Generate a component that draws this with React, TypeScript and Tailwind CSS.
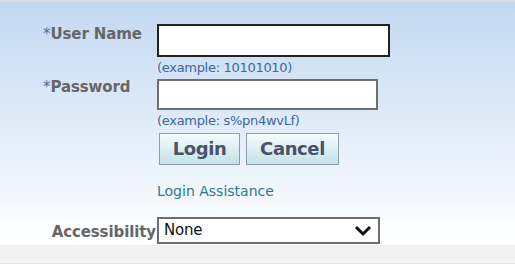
import React from "react";

const font = { fontFamily: '"DejaVu Sans", Tahoma, Verdana, sans-serif' };

function Label({ text, star = true }: { text: string; star?: boolean }) {
  return (
    <span className="block text-[15px] leading-[14px] font-bold text-[#666666] tracking-[-0.1px] whitespace-nowrap">
      {star && <span className="text-[#4a6fa0] font-normal">*</span>}
      {text}
    </span>
  );
}

function Hint({ text }: { text: string }) {
  return (
    <div className="h-[22px] leading-[22px] text-[13px] text-[#3c66a5] tracking-[-0.3px] whitespace-nowrap">
      {text}
    </div>
  );
}

function Btn({ label, width }: { label: string; width: string }) {
  return (
    <button
      className={`${width} h-[32px] border border-[#8d9fad] bg-gradient-to-b from-[#f4fbfc] to-[#c4e2e9] text-[18px] font-bold text-[#4b5167] tracking-[-0.4px] leading-none`}
    >
      {label}
    </button>
  );
}

export default function App() {
  return (
    <div className="w-[515px] h-[264px] flex flex-col bg-[#f2f2f2] overflow-hidden" style={font}>
      <div className="h-[2px] bg-[#d7dde4]" />
      <div className="h-[243px] bg-gradient-to-b from-[#c3d8f1] to-[#ffffff] flex flex-col">
        <div className="flex mt-[22px]">
          <div className="w-[157px] pl-[43px] pt-[3px]">
            <Label text="User Name" />
          </div>
          <div className="flex flex-col">
            <input className="w-[233px] h-[33px] border-2 border-[#222222] bg-white outline-none" />
            <Hint text="(example: 10101010)" />
          </div>
        </div>
        <div className="flex">
          <div className="w-[157px] pl-[43px] pt-[1px]">
            <Label text="Password" />
          </div>
          <div className="flex flex-col">
            <input type="password" className="w-[221px] h-[31px] border-2 border-[#6f6f6f] bg-white outline-none" />
            <Hint text="(example: s%pn4wvLf)" />
          </div>
        </div>
        <div className="flex gap-[6px] pl-[159px] mt-[1px]">
          <Btn label="Login" width="w-[81px]" />
          <Btn label="Cancel" width="w-[93px]" />
        </div>
        <div className="pl-[157px] mt-[15px] h-[22px] leading-[22px] text-[14px] text-[#2a7b8b]">
          Login Assistance
        </div>
        <div className="flex items-center mt-[15px]">
          <div className="w-[157px] flex justify-end pr-[1px] pt-[2px]">
            <Label text="Accessibility" star={false} />
          </div>
          <div className="w-[223px] h-[27px] border-2 border-[#6f6f6f] bg-white flex items-center justify-between pl-[5px] pr-[6px]">
            <span className="text-[15px] text-[#111111] tracking-[-0.2px]">None</span>
            <svg width="18" height="12" viewBox="0 0 18 12">
              <path d="M2 2 L9 9 L16 2" fill="none" stroke="#111" strokeWidth="3" />
            </svg>
          </div>
        </div>
      </div>
      <div className="flex-1 bg-[#f2f2f2] border-b border-[#e2e2e2]" />
    </div>
  );
}
